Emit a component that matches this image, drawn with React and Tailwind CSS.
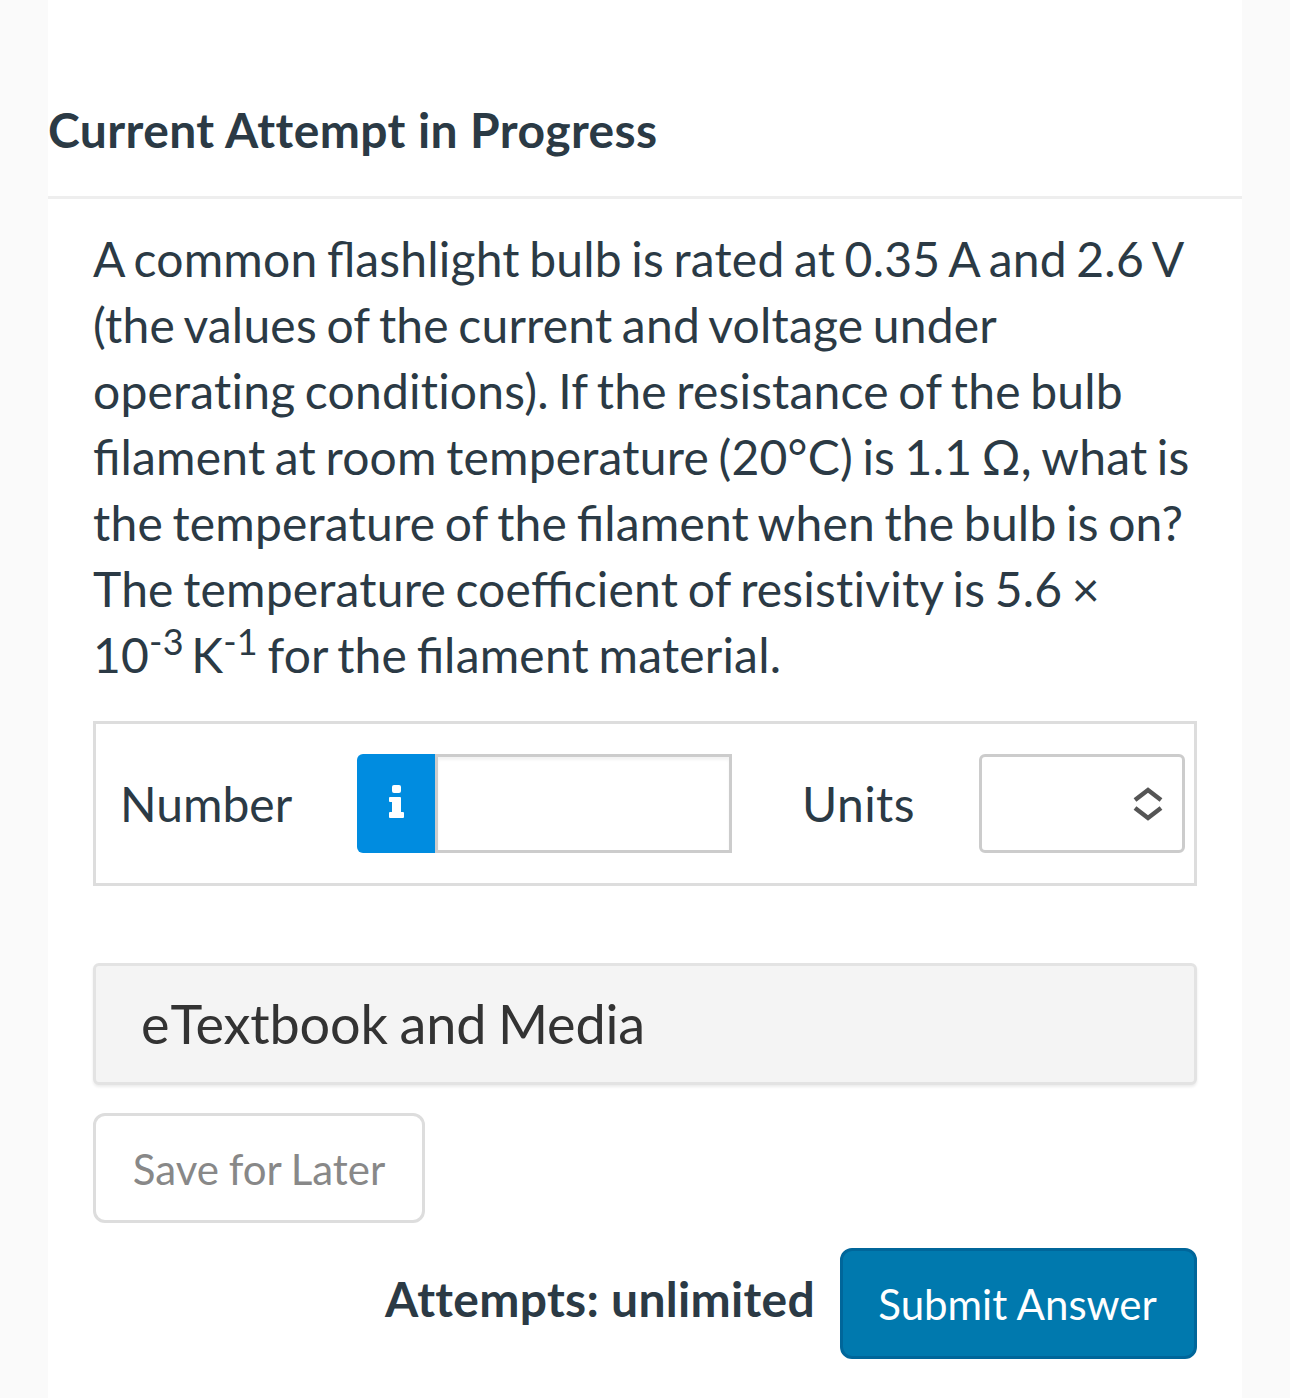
function Lig({ children }) {
  return <span className="tracking-normal">{children}</span>;
}

export default function App() {
  return (
    <div className="h-[1398px] w-[1290px] overflow-hidden bg-[#fafafa] px-[48px] font-['Lato',sans-serif] text-[#2b3a45]">
      <div className="h-full w-[1194px] bg-white">
        <div className="flex h-[199px] items-start border-b-[3px] border-[#eeeeee] pt-[102px]">
          <h1 className="text-[48px] font-bold leading-[56px] tracking-[0.4px]">Current Attempt in Progress</h1>
        </div>
        <div className="px-[45px]">
          <p className="mt-[27px] text-[48px] leading-[66px] tracking-[0.2px] [word-spacing:-3px]">
            A common <Lig>fl</Lig>ashlight bulb is rated at 0.35 A and 2.6 V (the values of the current and voltage under operating conditions). If the resistance of the bulb <Lig>fi</Lig>lament at room temperature (20°C) is 1.1 Ω, what is the temperature of the <Lig>fi</Lig>lament when the bulb is on? The temperature coe<Lig>ffi</Lig>cient of resistivity is 5.6 ×<br />10<sup className="text-[36px] leading-none">-3</sup> <span className="-ml-[2px]">K</span><sup className="text-[36px] leading-none">-1</sup> for the <Lig>fi</Lig>lament material.
          </p>
          <div className="mt-[33px] flex h-[165px] items-center border-[3px] border-[#dddddd] pl-[24px]">
            <span className="w-[237px] text-[48px] leading-none">Number</span>
            <div className="flex h-[99px] w-[375px]">
              <div className="flex w-[78px] items-center justify-center rounded-l-[6px] bg-[#008ce0] pb-[5px]">
                <svg width="15" height="33" viewBox="0 0 15 33" fill="#fff">
                  <rect x="3" y="0" width="9" height="8" rx="2" />
                  <path d="M1 12h10a1 1 0 0 1 1 1v14h2a1 1 0 0 1 1 1v4a1 1 0 0 1-1 1H1a1 1 0 0 1-1-1v-4a1 1 0 0 1 1-1h2V17H1a1 1 0 0 1-1-1v-3a1 1 0 0 1 1-1z" />
                </svg>
              </div>
              <div className="flex-1 border-[3px] border-[#cccccc] bg-white shadow-[inset_0_3px_3px_rgba(0,0,0,0.05)]" />
            </div>
            <span className="ml-[70px] w-[177px] text-[48px] leading-none tracking-[0.4px]">Units</span>
            <div className="flex h-[99px] w-[206px] items-center justify-end rounded-[6px] border-[3px] border-[#cccccc] pr-[19px]">
              <svg width="30" height="34" viewBox="0 0 30 34" fill="none" stroke="#555555" strokeWidth="4.5" strokeLinejoin="miter">
                <path d="M2 13 L15 3 L28 13" />
                <path d="M2 21 L15 31 L28 21" />
              </svg>
            </div>
          </div>
          <div className="mt-[77px] flex h-[122px] items-center rounded-[6px] border-[3px] border-[#e3e3e3] bg-[#f4f4f4] pl-[45px] text-[54px] leading-none tracking-[-0.15px] text-[#333333] shadow-[0_2px_3px_rgba(0,0,0,0.08)] [word-spacing:-2px]">
            <span className="mr-[1px]">e</span>Textbook and Media
          </div>
          <button className="mt-[28px] flex h-[110px] w-[332px] items-center justify-center rounded-[12px] border-[3px] border-[#dddddd] bg-white pt-[2px] text-[42px] text-[#888888] [word-spacing:-1px]">
            Save for Later
          </button>
          <div className="mt-[25px] flex items-center justify-end">
            <span className="mr-[25px] pb-[10px] text-[48px] font-bold leading-none tracking-[0.3px]">Attempts: unlimited</span>
            <button className="flex h-[111px] w-[357px] items-center justify-center rounded-[12px] border-[3px] border-[#00669a] bg-[#0079ae] pr-[2px] pt-[2px] text-[42px] text-white">
              Submit Answer
            </button>
          </div>
        </div>
      </div>
    </div>
  );
}
